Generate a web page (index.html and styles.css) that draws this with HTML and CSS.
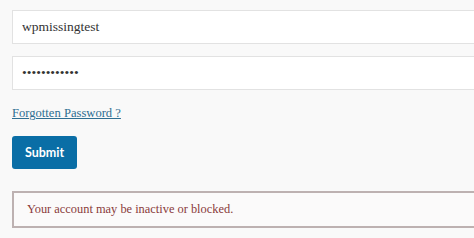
FILE: index.html
```html
<!DOCTYPE html>
<html>
<head>
<meta charset="utf-8">
<link rel="stylesheet" href="styles.css">
</head>
<body>
<div class="page">
  <form class="login">
    <input class="field" type="text" value="wpmissingtest">
    <input class="field" type="password" value="abcdefghijkl">
    <a class="forgot" href="#">Forgotten Password ?</a>
    <button class="submit" type="button">Submit</button>
  </form>
  <div class="error">Your account may be inactive or blocked.</div>
</div>
</body>
</html>
```
FILE: styles.css
```css
html, body {
  margin: 0;
  padding: 0;
  background: #f9f9f9;
  overflow: hidden;
}
.page {
  width: 480px;
  padding: 10px 0 0 12px;
  font-family: "Liberation Serif", "Times New Roman", serif;
}
.login {
  display: flex;
  flex-direction: column;
  align-items: flex-start;
}
.field {
  box-sizing: border-box;
  width: 100%;
  height: 34px;
  margin: 0 0 12px 0;
  padding: 0 9px;
  border: 1px solid #e2e2e2;
  background: #ffffff;
  font-family: "Liberation Serif", "Times New Roman", serif;
  font-size: 13.5px;
  color: #333333;
  outline: none;
}
.forgot {
  margin-top: 3px;
  font-size: 12.6px;
  color: #2f6f92;
  text-decoration: underline;
  line-height: 16px;
}
.submit {
  margin-top: 15px;
  width: 65px;
  height: 33px;
  border: none;
  border-radius: 3px;
  background: #0a6ea6;
  color: #ffffff;
  font-family: "Lato", sans-serif;
  font-weight: 700;
  font-size: 12.5px;
  padding: 0;
}
.error {
  box-sizing: border-box;
  margin-top: 22px;
  height: 37px;
  width: 100%;
  border: 2px solid #bdb1b1;
  background: #fbfafa;
  color: #8a3b3b;
  font-size: 12.4px;
  padding: 0 0 0 13px;
  display: flex;
  align-items: center;
}
```
